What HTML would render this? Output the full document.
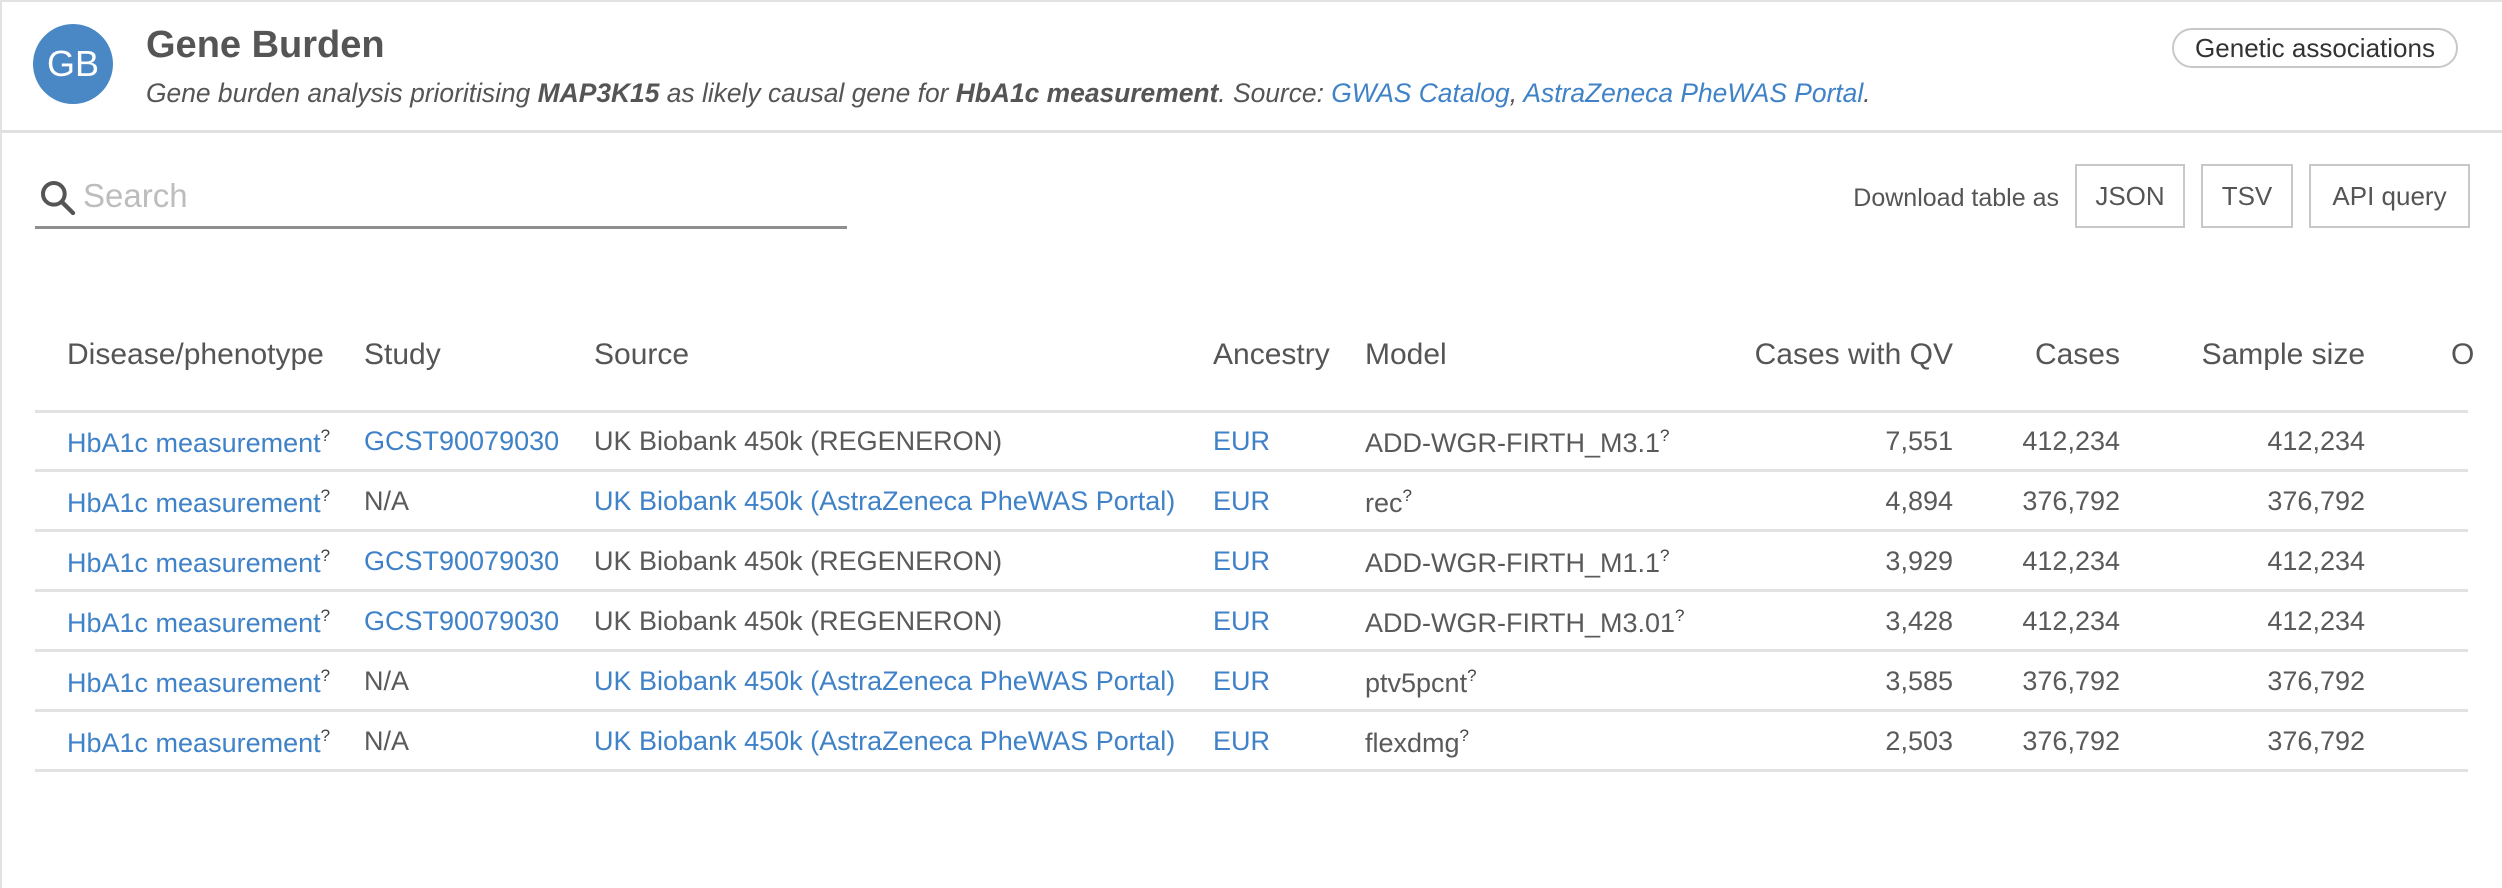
<!DOCTYPE html>
<html><head><meta charset="utf-8"><style>
*{margin:0;padding:0;box-sizing:border-box}
body{width:2502px;height:888px;background:#fff;font-family:"Liberation Sans",sans-serif;color:#5a5a5a;position:relative;overflow:hidden}
.a{position:absolute;white-space:nowrap}
.card{position:absolute;left:0;top:0;width:2502px;height:888px;border:2px solid #e2e2e2;border-right:none;border-bottom:none}
.hr{position:absolute;left:0;width:2502px;height:3px;background:#e0e0e0}
.link{color:#3f82c8}
.btn{position:absolute;border:2px solid #c8c8c8;height:64px;font-size:26px;line-height:60px;text-align:center;color:#555}
.th{position:absolute;top:338px;font-size:30px;color:#555}
.row{position:absolute;left:35px;width:2433px;height:3px;background:#e2e2e2}
.c{position:absolute;font-size:27px;white-space:nowrap}
.r{text-align:right}
sup{font-size:17px;vertical-align:11px;color:#444}
</style></head><body>
<div class="card"></div>
<div class="a" style="left:33px;top:24px;width:80px;height:80px;border-radius:50%;background:#4a87c5;color:#fff;font-size:36px;line-height:80px;text-align:center">GB</div>
<div class="a" style="left:146px;top:24px;font-size:38px;font-weight:bold;color:#555">Gene Burden</div>
<div class="a" style="left:146px;top:78px;font-size:26.4px;font-style:italic;color:#555">Gene burden analysis prioritising <b>MAP3K15</b> as likely causal gene for <b>HbA1c measurement</b>. Source: <span class="link">GWAS Catalog</span>, <span class="link">AstraZeneca PheWAS Portal</span>.</div>
<div class="a" style="left:2172px;top:28px;width:286px;height:40px;border:2px solid #c8c8c8;border-radius:20px;font-size:26px;line-height:36px;text-align:center;color:#333">Genetic associations</div>
<div class="hr" style="top:130px"></div>
<svg class="a" style="left:38px;top:178px" width="40" height="40" viewBox="0 0 24 24"><circle cx="9.5" cy="9.5" r="6.5" fill="none" stroke="#555" stroke-width="2.4"/><path d="M14.5 14.5L21 21" stroke="#555" stroke-width="2.6" stroke-linecap="round"/></svg>
<div class="a" style="left:83px;top:177px;font-size:33px;color:#bdbdbd">Search</div>
<div class="a" style="left:35px;top:226px;width:812px;height:3px;background:#8f8f8f"></div>
<div class="a" style="right:443px;top:184px;font-size:25px;color:#555">Download table as</div>
<div class="btn" style="left:2075px;top:164px;width:110px">JSON</div>
<div class="btn" style="left:2201px;top:164px;width:92px">TSV</div>
<div class="btn" style="left:2309px;top:164px;width:161px">API query</div>
<div class="th" style="left:67px">Disease/phenotype</div>
<div class="th" style="left:364px">Study</div>
<div class="th" style="left:594px">Source</div>
<div class="th" style="left:1213px">Ancestry</div>
<div class="th" style="left:1365px">Model</div>
<div class="th r" style="right:549px">Cases with QV</div>
<div class="th r" style="right:382px">Cases</div>
<div class="th r" style="right:137px">Sample size</div>
<div class="th" style="left:2451px">O</div>
<div class="row" style="top:410px"></div>
<div class="row" style="top:469px"></div>
<div class="row" style="top:529px"></div>
<div class="row" style="top:589px"></div>
<div class="row" style="top:649px"></div>
<div class="row" style="top:709px"></div>
<div class="row" style="top:769px"></div>

<div style="position:absolute;top:426px;left:0;width:2502px">
<div class="c link" style="left:67px">HbA1c measurement<sup>?</sup></div><div class="c link" style="left:364px">GCST90079030</div><div class="c" style="left:594px">UK Biobank 450k (REGENERON)</div><div class="c link" style="left:1213px">EUR</div><div class="c" style="left:1365px">ADD-WGR-FIRTH_M3.1<sup>?</sup></div><div class="c" style="right:549px">7,551</div><div class="c" style="right:382px">412,234</div><div class="c" style="right:137px">412,234</div>
</div>
<div style="position:absolute;top:486px;left:0;width:2502px">
<div class="c link" style="left:67px">HbA1c measurement<sup>?</sup></div><div class="c" style="left:364px">N/A</div><div class="c link" style="left:594px">UK Biobank 450k (AstraZeneca PheWAS Portal)</div><div class="c link" style="left:1213px">EUR</div><div class="c" style="left:1365px">rec<sup>?</sup></div><div class="c" style="right:549px">4,894</div><div class="c" style="right:382px">376,792</div><div class="c" style="right:137px">376,792</div>
</div>
<div style="position:absolute;top:546px;left:0;width:2502px">
<div class="c link" style="left:67px">HbA1c measurement<sup>?</sup></div><div class="c link" style="left:364px">GCST90079030</div><div class="c" style="left:594px">UK Biobank 450k (REGENERON)</div><div class="c link" style="left:1213px">EUR</div><div class="c" style="left:1365px">ADD-WGR-FIRTH_M1.1<sup>?</sup></div><div class="c" style="right:549px">3,929</div><div class="c" style="right:382px">412,234</div><div class="c" style="right:137px">412,234</div>
</div>
<div style="position:absolute;top:606px;left:0;width:2502px">
<div class="c link" style="left:67px">HbA1c measurement<sup>?</sup></div><div class="c link" style="left:364px">GCST90079030</div><div class="c" style="left:594px">UK Biobank 450k (REGENERON)</div><div class="c link" style="left:1213px">EUR</div><div class="c" style="left:1365px">ADD-WGR-FIRTH_M3.01<sup>?</sup></div><div class="c" style="right:549px">3,428</div><div class="c" style="right:382px">412,234</div><div class="c" style="right:137px">412,234</div>
</div>
<div style="position:absolute;top:666px;left:0;width:2502px">
<div class="c link" style="left:67px">HbA1c measurement<sup>?</sup></div><div class="c" style="left:364px">N/A</div><div class="c link" style="left:594px">UK Biobank 450k (AstraZeneca PheWAS Portal)</div><div class="c link" style="left:1213px">EUR</div><div class="c" style="left:1365px">ptv5pcnt<sup>?</sup></div><div class="c" style="right:549px">3,585</div><div class="c" style="right:382px">376,792</div><div class="c" style="right:137px">376,792</div>
</div>
<div style="position:absolute;top:726px;left:0;width:2502px">
<div class="c link" style="left:67px">HbA1c measurement<sup>?</sup></div><div class="c" style="left:364px">N/A</div><div class="c link" style="left:594px">UK Biobank 450k (AstraZeneca PheWAS Portal)</div><div class="c link" style="left:1213px">EUR</div><div class="c" style="left:1365px">flexdmg<sup>?</sup></div><div class="c" style="right:549px">2,503</div><div class="c" style="right:382px">376,792</div><div class="c" style="right:137px">376,792</div>
</div>
</body></html>
